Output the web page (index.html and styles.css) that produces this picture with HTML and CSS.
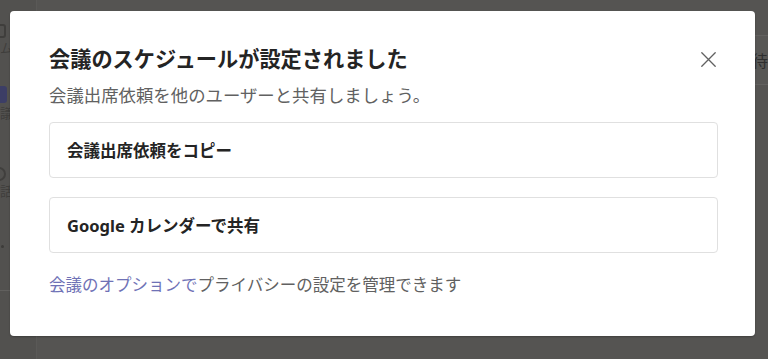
FILE: index.html
```html
<!DOCTYPE html>
<html lang="ja">
<head>
<meta charset="utf-8">
<title>会議のスケジュールが設定されました</title>
<link rel="stylesheet" href="styles.css">
</head>
<body>
<div class="app">
  <aside class="rail">
    <div class="rail-icon rail-icon-outline"></div>
    <div class="rail-label">ム</div>
    <div class="rail-icon rail-icon-filled"></div>
    <div class="rail-label">議</div>
    <div class="rail-icon rail-icon-round"></div>
    <div class="rail-label">話</div>
    <div class="rail-dot"></div>
    <div class="rail-sep"></div>
  </aside>
  <main class="main">
    <div class="topbar"><span class="invite">招待</span></div>
  </main>
</div>

<div class="dialog" role="dialog" aria-labelledby="dlg-title">
  <div class="dialog-head">
    <h1 id="dlg-title" class="dialog-title">会議のスケジュールが設定されました</h1>
    <button class="close" aria-label="閉じる">
      <svg width="15" height="15" viewBox="0 0 15 15" aria-hidden="true">
        <path d="M0.8 0.8 L14.2 14.2 M14.2 0.8 L0.8 14.2" stroke="#616161" stroke-width="1.3" fill="none" stroke-linecap="round"/>
      </svg>
    </button>
  </div>
  <p class="dialog-sub">会議出席依頼を他のユーザーと共有しましょう。</p>
  <div class="actions">
    <button class="action">会議出席依頼をコピー</button>
    <button class="action">Google カレンダーで共有</button>
  </div>
  <p class="footer"><a class="link" href="#">会議のオプションで</a>プライバシーの設定を管理できます</p>
</div>
</body>
</html>
```

FILE: styles.css
```css
html, body {
  margin: 0;
  padding: 0;
}

body {
  width: 768px;
  height: 359px;
  overflow: hidden;
  background: #555452;
  font-family: "Noto Sans", "Noto Sans CJK JP", sans-serif;
  position: relative;
}

.app {
  display: flex;
  height: 359px;
}

.rail {
  width: 36px;
  display: flex;
  flex-direction: column;
  align-items: flex-start;
  background: #52514f;
  border-right: 1px solid #5a5957;
}

.rail-icon {
  margin-left: -8px;
  width: 14px;
  height: 14px;
  border-radius: 3px;
}

.rail-icon-outline {
  margin-top: 24px;
  border: 2px solid #3f3e3c;
  box-sizing: border-box;
}

.rail-icon-filled {
  margin-top: 30px;
  width: 15px;
  height: 17px;
  background: #3c3e66;
}

.rail-icon-round {
  margin-top: 46px;
  border: 2px solid #403f3d;
  border-radius: 50%;
  box-sizing: border-box;
}

.rail-label {
  margin-left: 0;
  margin-top: 2px;
  font-size: 13px;
  line-height: 16px;
  color: #3f3e3c;
}

.rail-dot {
  margin-top: 46px;
  margin-left: 1px;
  width: 3px;
  height: 3px;
  border-radius: 50%;
  background: #3d3c3a;
}

.rail-sep {
  margin-top: 42px;
  width: 36px;
  height: 1px;
  background: #61605e;
}

.main {
  flex: 1;
  overflow: hidden;
  display: flex;
  flex-direction: column;
}

.topbar {
  margin-top: 35px;
  height: 48px;
  border-top: 1px solid #62615f;
  border-bottom: 1px solid #62615f;
  background: #585755;
  display: flex;
  align-items: center;
  justify-content: flex-end;
}

.invite {
  margin-right: 0;
  font-size: 16px;
  color: #2e2e2e;
}

.dialog {
  position: absolute;
  left: 10px;
  top: 11px;
  width: 745px;
  height: 325px;
  box-sizing: border-box;
  padding: 34px 37px 0 39px;
  background: #ffffff;
  border-radius: 4px;
  box-shadow: 0 1px 2px rgba(0, 0, 0, 0.25);
  display: flex;
  flex-direction: column;
}

.dialog-head {
  display: flex;
  align-items: center;
  justify-content: space-between;
  height: 28px;
}

.dialog-title {
  margin: 0;
  font-size: 21.2px;
  line-height: 28px;
  font-weight: 700;
  color: #242424;
}

.close {
  margin: 0 2px 0 0;
  padding: 0;
  border: 0;
  background: transparent;
  width: 15px;
  height: 15px;
  display: flex;
  cursor: pointer;
}

.dialog-sub {
  margin: 10px 0 0;
  font-size: 17.4px;
  line-height: 24px;
  color: #616161;
}

.actions {
  margin-top: 15px;
  display: flex;
  flex-direction: column;
  gap: 19px;
}

.action {
  height: 56px;
  box-sizing: border-box;
  border: 1px solid #e0e0e0;
  border-radius: 4px;
  background: #ffffff;
  padding: 0 17px;
  text-align: left;
  font-family: "Noto Sans", "Noto Sans CJK JP", sans-serif;
  font-size: 16.5px;
  font-weight: 700;
  color: #242424;
  cursor: pointer;
}

.footer {
  margin: 20px 0 0;
  font-size: 16.5px;
  line-height: 24px;
  color: #616161;
}

.link {
  color: #6f72b6;
  text-decoration: none;
}
```
